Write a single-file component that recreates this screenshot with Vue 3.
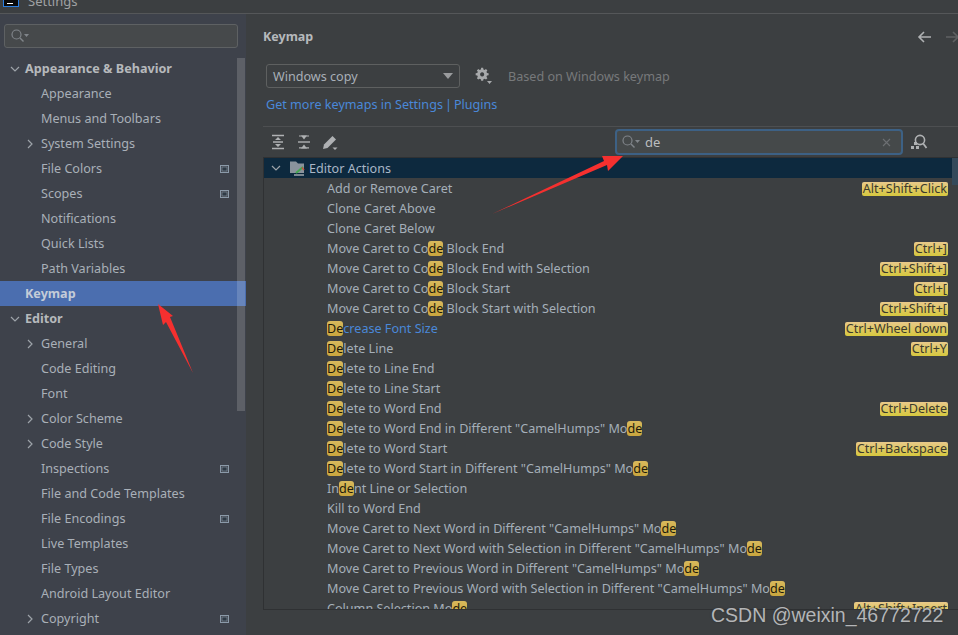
<script setup>
const tree = [
  { label: 'Appearance & Behavior', level: 0, open: true, bold: true },
  { label: 'Appearance', level: 1 },
  { label: 'Menus and Toolbars', level: 1 },
  { label: 'System Settings', level: 1, closed: true },
  { label: 'File Colors', level: 1, badge: true },
  { label: 'Scopes', level: 1, badge: true },
  { label: 'Notifications', level: 1 },
  { label: 'Quick Lists', level: 1 },
  { label: 'Path Variables', level: 1 },
  { label: 'Keymap', level: 0, bold: true, selected: true },
  { label: 'Editor', level: 0, open: true, bold: true },
  { label: 'General', level: 1, closed: true },
  { label: 'Code Editing', level: 1 },
  { label: 'Font', level: 1 },
  { label: 'Color Scheme', level: 1, closed: true },
  { label: 'Code Style', level: 1, closed: true },
  { label: 'Inspections', level: 1, badge: true },
  { label: 'File and Code Templates', level: 1 },
  { label: 'File Encodings', level: 1, badge: true },
  { label: 'Live Templates', level: 1 },
  { label: 'File Types', level: 1 },
  { label: 'Android Layout Editor', level: 1 },
  { label: 'Copyright', level: 1, closed: true, badge: true }
]

// [de] marks the part that the search matched
const actions = [
  ['Add or Remove Caret', 'Alt+Shift+Click'],
  ['Clone Caret Above'],
  ['Clone Caret Below'],
  ['Move Caret to Co[de] Block End', 'Ctrl+]'],
  ['Move Caret to Co[de] Block End with Selection', 'Ctrl+Shift+]'],
  ['Move Caret to Co[de] Block Start', 'Ctrl+['],
  ['Move Caret to Co[de] Block Start with Selection', 'Ctrl+Shift+['],
  ['[De]crease Font Size', 'Ctrl+Wheel down', true],
  ['[De]lete Line', 'Ctrl+Y'],
  ['[De]lete to Line End'],
  ['[De]lete to Line Start'],
  ['[De]lete to Word End', 'Ctrl+Delete'],
  ['[De]lete to Word End in Different "CamelHumps" Mo[de]'],
  ['[De]lete to Word Start', 'Ctrl+Backspace'],
  ['[De]lete to Word Start in Different "CamelHumps" Mo[de]'],
  ['In[de]nt Line or Selection'],
  ['Kill to Word End'],
  ['Move Caret to Next Word in Different "CamelHumps" Mo[de]'],
  ['Move Caret to Next Word with Selection in Different "CamelHumps" Mo[de]'],
  ['Move Caret to Previous Word in Different "CamelHumps" Mo[de]'],
  ['Move Caret to Previous Word with Selection in Different "CamelHumps" Mo[de]'],
  ['Column Selection Mo[de]', 'Alt+Shift+Insert']
].map(([text, keys, link]) => ({
  keys,
  link,
  parts: text.split(/(\[[^\]]+\])/).filter(Boolean).map(p => ({
    hit: p.startsWith('['),
    text: p.replace(/[\[\]]/g, '')
  }))
}))
</script>

<template>
  <div class="window">
    <div class="titlebar">
      <span class="app-icon"><i /></span>
      <span class="title">Settings</span>
      <svg class="close" width="12" height="8" viewBox="0 0 12 8">
        <path d="M1 4 L5 0 L9 4" fill="none" stroke="#9a9c9e" stroke-width="1" />
      </svg>
    </div>

    <div class="body">
      <aside class="sidebar">
        <div class="side-search">
          <svg width="20" height="16" viewBox="0 0 20 16">
            <circle cx="6.5" cy="6.5" r="4.5" fill="none" stroke="#80858a" stroke-width="1.2" />
            <path d="M10 10 L13.5 13.5" stroke="#80858a" stroke-width="1.4" />
            <path d="M14 6 h5 l-2.5 3 z" fill="#80858a" />
          </svg>
        </div>
        <div class="tree">
          <div
            v-for="item in tree"
            :key="item.label"
            class="tree-row"
            :class="{ selected: item.selected, bold: item.bold, sub: item.level === 1 }"
          >
            <svg v-if="item.open" class="chev" width="10" height="10" viewBox="0 0 10 10">
              <path d="M1 3 L5 7 L9 3" fill="none" stroke="#9da3a9" stroke-width="1.2" />
            </svg>
            <svg v-if="item.closed" class="chev" width="10" height="10" viewBox="0 0 10 10">
              <path d="M3 1 L7 5 L3 9" fill="none" stroke="#9da3a9" stroke-width="1.2" />
            </svg>
            <span class="tree-label">{{ item.label }}</span>
            <svg v-if="item.badge" class="badge" width="9" height="8" viewBox="0 0 9 8">
              <rect x="0.5" y="0.5" width="8" height="7" fill="none" stroke="#8b9aa9" />
              <rect x="2" y="2" width="5" height="4" fill="#2f3a45" stroke="#8b9aa9" stroke-width="0.6" />
            </svg>
          </div>
        </div>
        <div class="side-scroll" />
      </aside>

      <main class="content">
        <div class="content-head">
          <span class="head-title">Keymap</span>
          <div class="nav">
            <svg width="16" height="14" viewBox="0 0 16 14">
              <path d="M14 7 H2.5 M7 2 L2 7 L7 12" fill="none" stroke="#afb1b3" stroke-width="1.6" />
            </svg>
            <svg width="16" height="14" viewBox="0 0 16 14">
              <path d="M2 7 H13.5 M9 2 L14 7 L9 12" fill="none" stroke="#5f6163" stroke-width="1.6" />
            </svg>
          </div>
        </div>

        <div class="scheme-row">
          <div class="select">
            <span>Windows copy</span>
            <svg width="10" height="6" viewBox="0 0 10 6"><path d="M0 0 H10 L5 6 z" fill="#999b9d" /></svg>
          </div>
          <svg class="gear" width="18" height="18" viewBox="0 0 18 18">
            <path d="M7.5 1 h2.4 l.4 2 1.4.6 1.7-1.1 1.7 1.7-1.1 1.7.6 1.4 2 .4 v2.4 l-2 .4-.6 1.4 1.1 1.7-1.7 1.7-1.7-1.1-1.4.6-.4 2 h-2.4 l-.4-2-1.4-.6-1.7 1.1-1.7-1.7 1.1-1.7-.6-1.4-2-.4 v-2.4 l2-.4.6-1.4-1.1-1.7 1.7-1.7 1.7 1.1 1.4-.6 z M8.7 6.5 a2.5 2.5 0 1 0 .01 0 z" fill="#a7a9ab" fill-rule="evenodd" transform="scale(.82)" />
            <path d="M12 14 h5 l-2.5 3 z" fill="#a7a9ab" />
          </svg>
          <span class="based">Based on Windows keymap</span>
        </div>

        <div class="more">Get more keymaps in Settings<span class="sep">|</span>Plugins</div>

        <div class="toolbar">
          <div class="tools">
            <svg width="16" height="16" viewBox="0 0 16 16">
              <path d="M2 1.5 H14 M2 14.5 H14 M3 8 H13" stroke="#afb1b3" stroke-width="1.4" />
              <path d="M8 3 L11 6 H5 z M8 13 L5 10 H11 z" fill="#afb1b3" />
            </svg>
            <svg width="16" height="16" viewBox="0 0 16 16">
              <path d="M2 8 H14" stroke="#afb1b3" stroke-width="1.4" />
              <path d="M5 1.5 H11 L8 5.5 z M5 14.5 H11 L8 10.5 z" fill="#afb1b3" />
              <path d="M3 13.8 H13 M3 2 H13" stroke="#afb1b3" stroke-width="1.2" />
            </svg>
            <svg width="16" height="16" viewBox="0 0 16 16">
              <path d="M1 15 L2 10.5 L10.5 2 L14 5.5 L5.5 14 z" fill="#afb1b3" />
              <path d="M10.5 13.5 h5 l-2.5 2.5 z" fill="#afb1b3" />
            </svg>
          </div>
          <div class="search">
            <svg width="20" height="16" viewBox="0 0 20 16">
              <circle cx="6.5" cy="6.5" r="4.5" fill="none" stroke="#80858a" stroke-width="1.2" />
              <path d="M10 10 L13.5 13.5" stroke="#80858a" stroke-width="1.4" />
              <path d="M14 6 h5 l-2.5 3 z" fill="#80858a" />
            </svg>
            <span class="query">de</span>
            <svg class="clear" width="9" height="9" viewBox="0 0 9 9">
              <path d="M1 1 L8 8 M8 1 L1 8" stroke="#6d7073" stroke-width="1.1" />
            </svg>
          </div>
          <svg class="find-key" width="18" height="18" viewBox="0 0 18 18">
            <circle cx="10" cy="7" r="4.6" fill="none" stroke="#afb1b3" stroke-width="1.6" />
            <path d="M13.2 10.5 L16.5 15" stroke="#afb1b3" stroke-width="1.8" />
            <path d="M4 9 h3 v3 h-3 z M1 13 h3 v3 h-3 z M6 13 h3 v3 h-3 z" fill="#afb1b3" />
          </svg>
        </div>

        <div class="actions">
          <div class="group-row">
            <svg class="chev" width="10" height="10" viewBox="0 0 10 10">
              <path d="M1 3 L5 7 L9 3" fill="none" stroke="#9da3a9" stroke-width="1.2" />
            </svg>
            <svg class="folder" width="15" height="15" viewBox="0 0 15 15">
              <path d="M0 0.5 H6 L8 2.5 H14 V12 H0 z" fill="#8a939c" />
              <path d="M6 12 L13 6" stroke="#45a650" stroke-width="2" />
              <path d="M12 6.5 L14 9" stroke="#c94f3f" stroke-width="1.4" />
              <path d="M4 14 H14" stroke="#c3c6c9" stroke-width="1.2" />
            </svg>
            <span>Editor Actions</span>
          </div>
          <div v-for="(row, i) in actions" :key="i" class="action-row">
            <span class="action-name" :class="{ link: row.link }">
              <template v-for="(part, j) in row.parts" :key="j">
                <mark v-if="part.hit">{{ part.text }}</mark>
                <template v-else>{{ part.text }}</template>
              </template>
            </span>
            <kbd v-if="row.keys">{{ row.keys }}</kbd>
          </div>
          <div class="list-thumb" />
        </div>
      </main>
    </div>

    <svg class="arrows" width="958" height="635" viewBox="0 0 958 635">
      <path d="M158 304 L173 316 L170 317 L193 373 L166 322 L163 325 z" fill="#f5302f" />
      <path d="M623 156 L608 171 L607 165 L492 214 L604 161 L602 156 z" fill="#f5302f" />
    </svg>
    <span class="watermark">CSDN @weixin_46772722</span>
  </div>
</template>

<style>
html, body {
  margin: 0;
  background: #3c3f41;
}
</style>

<style scoped>
.window {
  position: relative;
  width: 958px;
  height: 635px;
  overflow: hidden;
  background: #3c3f41;
  color: #a9b0b8;
  font-family: "Noto Sans", "Open Sans", sans-serif;
  font-size: 12.6px;
}

.titlebar {
  height: 13px;
  border-bottom: 1px solid #555759;
  display: flex;
  align-items: flex-end;
  gap: 9px;
  padding-left: 3px;
  overflow: hidden;
  box-sizing: content-box;
}

.app-icon {
  width: 16px;
  height: 14px;
  margin-bottom: 6px;
  flex: none;
  background: #0a0a0a;
  border: 1px solid #2b7fe0;
  box-sizing: border-box;
  display: flex;
  align-items: flex-end;
  padding: 0 0 2px 3px;
}

.app-icon i {
  width: 6px;
  height: 1px;
  background: #fff;
}

.title {
  line-height: 18px;
  margin-bottom: 3px;
  color: #a0a2a4;
  font-size: 13px;
}

.close {
  margin-left: auto;
  margin-bottom: 9px;
}

.body {
  display: flex;
  height: 621px;
}

.sidebar {
  position: relative;
  width: 246px;
  flex: none;
  background: #3e424b;
  padding-top: 10px;
  box-sizing: border-box;
  overflow: hidden;
}

.side-search {
  height: 24px;
  margin: 0 8px 0 4px;
  border: 1px solid #5e6163;
  border-radius: 3px;
  background: #46494b;
  display: flex;
  align-items: center;
  padding-left: 5px;
  box-sizing: border-box;
}

.tree {
  margin-top: 8px;
}

.tree-row {
  position: relative;
  height: 25px;
  display: flex;
  align-items: center;
  padding-left: 25px;
  white-space: nowrap;
}

.tree-row.sub {
  padding-left: 41px;
}

.tree-row.bold {
  font-weight: 700;
  color: #b6b9bc;
}

.tree-row.selected {
  background: #4b6eaf;
  color: #c4ccd8;
}

.chev {
  position: absolute;
  left: 10px;
}

.sub .chev {
  left: 25px;
}

.badge {
  position: absolute;
  left: 220px;
}

.side-scroll {
  position: absolute;
  left: 237px;
  top: 44px;
  width: 8px;
  height: 353px;
  background: rgba(255, 255, 255, 0.16);
}

.content {
  flex: 1;
  min-width: 0;
  padding: 0 0 0 17px;
}

.content-head {
  height: 46px;
  display: flex;
  align-items: center;
  justify-content: space-between;
  padding-bottom: 1px;
  box-sizing: border-box;
}

.head-title {
  font-weight: 700;
  color: #b6b9bc;
  font-size: 12.5px;
}

.nav {
  display: flex;
  gap: 11px;
  margin-right: -2px;
}

.scheme-row {
  margin: 4px 0 0 3px;
  height: 24px;
  display: flex;
  align-items: center;
}

.select {
  width: 194px;
  height: 24px;
  border: 1px solid #5e6060;
  border-radius: 3px;
  box-sizing: border-box;
  display: flex;
  align-items: center;
  justify-content: space-between;
  padding: 0 6px;
  color: #a9b0b8;
  background: #3c3f41;
}

.gear {
  margin-left: 15px;
}

.based {
  margin-left: 15px;
  color: #77797b;
}

.more {
  margin: 5px 0 0 3px;
  height: 24px;
  line-height: 24px;
  color: #4a88d8;
}

.sep {
  margin: 0 2px;
}

.toolbar {
  margin-top: 9px;
  height: 31px;
  border-top: 1px solid #4d4f51;
  box-sizing: border-box;
  display: flex;
  align-items: center;
}

.tools {
  display: flex;
  gap: 10px;
  margin-left: 7px;
  width: 345px;
}

.search {
  width: 288px;
  height: 26px;
  border: 2px solid #3d6185;
  border-radius: 4px;
  background: #45494a;
  box-sizing: border-box;
  display: flex;
  align-items: center;
  padding-left: 4px;
}

.query {
  margin-left: 4px;
  color: #bbbdbf;
  font-size: 13px;
}

.clear {
  margin-left: auto;
  margin-right: 10px;
}

.find-key {
  margin-left: 7px;
}

.actions {
  position: relative;
  height: 453px;
  overflow: hidden;
  border-top: 1px solid #2f3133;
  border-bottom: 1px solid #2f3133;
  border-left: 1px solid #2f3133;
  box-sizing: border-box;
}

.group-row {
  position: relative;
  height: 20px;
  background: #0d293e;
  display: flex;
  align-items: center;
  padding-left: 26px;
  gap: 4px;
  color: #a9b7c6;
}

.group-row .chev {
  left: 7px;
}

.action-row {
  height: 20px;
  display: flex;
  align-items: center;
  justify-content: space-between;
  padding: 0 10px 0 63px;
  white-space: nowrap;
  color: #a5afb9;
}

.action-name.link {
  color: #4a88d8;
}

mark {
  display: inline-block;
  line-height: 15px;
  background: linear-gradient(#d8b95c, #c9a63e);
  color: #1d1a0c;
  border-radius: 3px;
}

kbd {
  font-family: inherit;
  font-size: 12.6px;
  line-height: 14px;
  margin-top: 1px;
  padding: 0 1px;
  background: linear-gradient(#e8c98a, #d6c83e);
  color: #3b3a2c;
  border-radius: 2px;
}

.list-thumb {
  position: absolute;
  right: 0;
  top: 0;
  width: 6px;
  height: 27px;
  background: #34495a;
}

.arrows {
  position: absolute;
  left: 0;
  top: 0;
  pointer-events: none;
}

.watermark {
  position: absolute;
  left: 711px;
  top: 604px;
  font-family: "Liberation Sans", sans-serif;
  font-size: 19.5px;
  color: #b4b6b8;
  text-shadow: 0 0 2px #333;
}
</style>
